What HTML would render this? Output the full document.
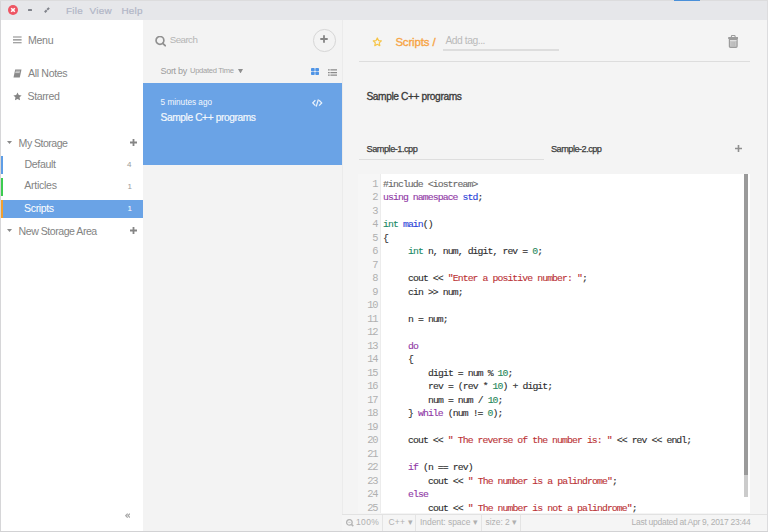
<!DOCTYPE html>
<html><head><meta charset="utf-8">
<style>
*{margin:0;padding:0;box-sizing:border-box}
html,body{width:768px;height:532px;overflow:hidden;background:#f2f2f3;font-family:"Liberation Sans",sans-serif}
.a{position:absolute}
.t{position:absolute;white-space:pre;line-height:1}
#strip{left:0;top:0;width:768px;height:1px;background:#dcdcdd}
#title{left:0;top:1px;width:768px;height:18.5px;background:#e6e7ea}
#frameL{left:0;top:1px;width:1.2px;height:531px;background:#d6d6d8}
#frameR{left:766.5px;top:1px;width:1.5px;height:531px;background:#dcdcde}
#frameB{left:0;top:530.7px;width:768px;height:1.3px;background:#d2d2d4}
#side{left:1px;top:19.5px;width:141.5px;height:511.5px;background:#fff}
#list{left:142.5px;top:19.5px;width:199px;height:511.5px;background:#f3f3f3}
#sep{left:341.5px;top:19.5px;width:1.5px;height:511.5px;background:#ebebeb}
#editor{left:343px;top:19.5px;width:424px;height:511.5px;background:#f4f4f4}
.menu{color:#b0b5c6;font-size:9.9px;letter-spacing:0.3px;-webkit-text-stroke:0.2px #b0b5c6}
.sd{color:#838383;font-size:10.6px}
.cnt{color:#9a9a9a;font-size:8px}
#code{left:380.5px;top:174px;width:369px;height:339px;background:#fff}
#gutter{left:358px;top:174px;width:22.5px;height:339px;background:#f6f6f6;border-right:1px solid #ececec}
.ln{position:absolute;left:358px;width:19.5px;text-align:right;font-family:"Liberation Mono",monospace;font-size:10.4px;letter-spacing:-1.1px;color:#b0b0b0;line-height:13.5px;margin-top:-0.6px;white-space:pre}
.cl{position:absolute;left:383px;font-family:"Liberation Mono",monospace;font-size:9.8px;letter-spacing:-0.91px;color:#2e2e2e;line-height:13.5px;margin-top:-0.9px;-webkit-text-stroke:0.12px currentColor;white-space:pre}
.k{color:#9038a6}.d{color:#2a3fd8}.ty{color:#1a8a66}.s{color:#bb3336}.n{color:#2a8a60}.m{color:#6a6a6a}
#status{left:341.5px;top:513.5px;width:425.5px;height:17.2px;background:#f5f5f5;border-top:1.5px solid #e2e2e2}
.sb{color:#b0b0b0;font-size:8.5px}
</style></head><body>
<div class="a" id="strip"></div>
<div class="a" style="left:674px;top:0;width:26px;height:1px;background:#4a90d9"></div>
<div class="a" id="title"></div>
<div class="a" id="side"></div>
<div class="a" id="list"></div>
<div class="a" id="sep"></div>
<div class="a" id="editor"></div>
<div class="a" id="frameL"></div>
<div class="a" id="frameR"></div>
<div class="a" id="frameB"></div>

<!-- title bar controls -->
<div class="a" style="left:7.7px;top:4.8px;width:10px;height:10px;border-radius:50%;background:#ee5563"></div>
<svg class="a" style="left:7.7px;top:4.8px" width="10" height="10" viewBox="0 0 10 10"><path d="M3.2 3.2L6.8 6.8M6.8 3.2L3.2 6.8" stroke="#fff" stroke-width="1.6"/></svg>
<div class="a" style="left:27.8px;top:9.1px;width:4.2px;height:1.9px;background:#80838b;border-radius:0.5px"></div>
<svg class="a" style="left:44px;top:7px" width="6" height="6" viewBox="0 0 6 6"><path d="M0.8 5.2L2.7 3.3M3.2 2.8L5.1 0.9" stroke="#80838b" stroke-width="2"/></svg>
<div class="t menu" style="left:66px;top:5.8px">File</div>
<div class="t menu" style="left:89.6px;top:5.8px">View</div>
<div class="t menu" style="left:121.4px;top:5.8px">Help</div>

<!-- sidebar -->
<svg class="a" style="left:13.4px;top:36.4px" width="8.6" height="8" viewBox="0 0 8.6 8"><path d="M0 1H8.6M0 3.9H8.6M0 6.8H8.6" stroke="#858585" stroke-width="1.15"/></svg>
<div class="t sd" style="left:28px;top:34.8px;letter-spacing:-0.32px">Menu</div>
<svg class="a" style="left:13px;top:68.5px" width="9" height="9" viewBox="0 0 9 9"><path d="M2.2 0.5H8.5L6.8 8.5H0.5Z" fill="#8a8a8a"/><path d="M2.6 2.2H7M2.3 3.6H6.7" stroke="#fff" stroke-width="0.6"/></svg>
<div class="t sd" style="left:28px;top:67.9px;letter-spacing:-0.34px">All Notes</div>
<svg class="a" style="left:13px;top:91.5px" width="9" height="9" viewBox="0 0 24 24"><path d="M12 1l3.4 7 7.6 1-5.5 5.3 1.3 7.7L12 18.4 5.2 22l1.3-7.7L1 9l7.6-1z" fill="#858585"/></svg>
<div class="t sd" style="left:27.6px;top:90.6px;letter-spacing:-0.42px">Starred</div>

<svg class="a" style="left:7px;top:141px" width="5" height="3" viewBox="0 0 5 3"><path d="M0 0H5L2.5 3Z" fill="#8a8a8a"/></svg>
<div class="t sd" style="left:18.6px;top:137.7px;letter-spacing:-0.54px">My Storage</div>
<svg class="a" style="left:130px;top:138.7px" width="7" height="7" viewBox="0 0 7 7"><path d="M3.5 0V7M0 3.5H7" stroke="#858585" stroke-width="1.8"/></svg>

<div class="a" style="left:1px;top:155.5px;width:2px;height:18.5px;background:#5e9de6"></div>
<div class="t sd" style="left:24.4px;top:158.5px;letter-spacing:-0.32px">Default</div>
<div class="t cnt" style="left:127.1px;top:160.6px">4</div>

<div class="a" style="left:1px;top:177.5px;width:2px;height:18.5px;background:#3ccc50"></div>
<div class="t sd" style="left:24.3px;top:180.4px;letter-spacing:-0.3px">Articles</div>
<div class="t cnt" style="left:127.6px;top:182.6px">1</div>

<div class="a" style="left:1px;top:199.5px;width:141.5px;height:18.5px;background:#6aa3e6"></div>
<div class="a" style="left:1px;top:199.5px;width:2px;height:18.5px;background:#f0a030"></div>
<div class="t sd" style="left:24.1px;top:202.6px;color:#fff;letter-spacing:-0.4px">Scripts</div>
<div class="t cnt" style="left:127.6px;top:204.6px;color:#fff">1</div>

<svg class="a" style="left:7px;top:229px" width="5" height="3" viewBox="0 0 5 3"><path d="M0 0H5L2.5 3Z" fill="#8a8a8a"/></svg>
<div class="t sd" style="left:18.6px;top:226px;letter-spacing:-0.49px">New Storage Area</div>
<svg class="a" style="left:130px;top:226.5px" width="7" height="7" viewBox="0 0 7 7"><path d="M3.5 0V7M0 3.5H7" stroke="#858585" stroke-width="1.8"/></svg>

<svg class="a" style="left:124.6px;top:513.2px" width="5.4" height="5.2" viewBox="0 0 5.4 5.2"><path d="M2.7 0.6L0.8 2.6L2.7 4.6M5 0.6L3.1 2.6L5 4.6" stroke="#a8a8a8" stroke-width="1.3" fill="none"/></svg>

<!-- note list -->
<svg class="a" style="left:155px;top:36px" width="11" height="11" viewBox="0 0 11 11"><circle cx="4.96" cy="4.4" r="3.9" fill="none" stroke="#909090" stroke-width="1.7"/><path d="M7.7 7.3L10.2 9.7" stroke="#909090" stroke-width="1.8" stroke-linecap="round"/></svg>
<div class="t" style="left:169.8px;top:35px;font-size:9.8px;color:#b5b5b5;letter-spacing:-0.6px">Search</div>
<div class="a" style="left:313px;top:29.2px;width:22.6px;height:22.6px;border-radius:50%;border:1px solid #d6d6d6"></div>
<svg class="a" style="left:320.3px;top:35.4px" width="8" height="8" viewBox="0 0 8 8"><path d="M4 0.3V7.7M0.3 4H7.7" stroke="#858585" stroke-width="1.8"/></svg>

<div class="t" style="left:160.5px;top:66.6px;font-size:9px;color:#9c9c9c;letter-spacing:-0.3px">Sort by</div>
<div class="t" style="left:190px;top:67.1px;font-size:7.6px;color:#a2a2a2;letter-spacing:-0.3px">Updated Time</div>
<svg class="a" style="left:238.4px;top:68.8px" width="5" height="4.5" viewBox="0 0 5 4.5"><path d="M0 0H5L2.5 4.5Z" fill="#8e8e8e"/></svg>
<svg class="a" style="left:311px;top:68.2px" width="8" height="7" viewBox="0 0 8 7"><rect x="0" y="0" width="3.7" height="3.2" rx="0.8" fill="#4f94e6"/><rect x="4.3" y="0" width="3.7" height="3.2" rx="0.8" fill="#4f94e6"/><rect x="0" y="3.8" width="3.7" height="3.2" rx="0.8" fill="#4f94e6"/><rect x="4.3" y="3.8" width="3.7" height="3.2" rx="0.8" fill="#4f94e6"/></svg>
<svg class="a" style="left:327.8px;top:68.5px" width="9.2" height="7" viewBox="0 0 9.2 7"><path d="M0 0.9H1.7M2.4 0.9H9.2M0 3.7H1.7M2.4 3.7H9.2M0 6.1H1.7M2.4 6.1H9.2" stroke="#8a8a8a" stroke-width="1.3"/></svg>

<div class="a" style="left:143px;top:83.3px;width:199px;height:81.8px;background:#6aa3e6"></div>
<div class="t" style="left:160.6px;top:98.9px;font-size:8.2px;color:#f4f8fd">5 minutes ago</div>
<div class="t" style="left:160.6px;top:113.4px;font-size:10.2px;color:#f3f8fd;-webkit-text-stroke:0.2px #f3f8fd;letter-spacing:-0.4px">Sample C++ programs</div>
<svg class="a" style="left:312px;top:99px" width="10.5" height="8" viewBox="0 0 10.5 8"><path d="M3.4 1.2L0.8 3.9L3.4 6.6M7.1 1.2L9.7 3.9L7.1 6.6M6.4 0.4L4.2 7.6" stroke="#eaf2fc" stroke-width="1.25" fill="none"/></svg>

<!-- editor header -->
<svg class="a" style="left:372.2px;top:36.8px" width="10.6" height="9.8" viewBox="0 0 24 23"><path d="M12 2.2l2.9 6.2 6.6.8-4.9 4.6 1.3 6.6L12 17.1l-5.9 3.3 1.3-6.6-4.9-4.6 6.6-.8z" fill="none" stroke="#f6c446" stroke-width="2.8" stroke-linejoin="round"/></svg>
<div class="t" style="left:395.4px;top:36.9px;font-size:11.4px;color:#f7a445;-webkit-text-stroke:0.35px #f7a445;letter-spacing:-0.12px">Scripts /</div>
<div class="t" style="left:445.4px;top:35.9px;font-size:10.3px;color:#bababa;letter-spacing:-0.45px">Add tag...</div>
<div class="a" style="left:443px;top:49.4px;width:116px;height:1.3px;background:#dddddd"></div>
<div class="a" style="left:359px;top:61px;width:391px;height:1.4px;background:#dddddd"></div>
<svg class="a" style="left:727.6px;top:35px" width="10.5" height="13" viewBox="0 0 10.5 13"><path d="M3.4 2.2V1.3Q3.4 0.5 4.2 0.5H6.3Q7.1 0.5 7.1 1.3V2.2" stroke="#9c9c9c" stroke-width="1.1" fill="none"/><rect x="0.1" y="2.1" width="10.3" height="2" rx="0.7" fill="#9c9c9c"/><path d="M1.4 4.6H9.1V11.3Q9.1 12.4 8 12.4H2.5Q1.4 12.4 1.4 11.3Z" fill="#c6c6c6" stroke="#9c9c9c" stroke-width="1.2"/><path d="M2 5.6H8.5" stroke="#e9e9e9" stroke-width="0.9"/><path d="M4 7V11M5.25 7V11M6.5 7V11" stroke="#b0b0b0" stroke-width="0.5"/></svg>

<div class="t" style="left:366.4px;top:92px;font-size:10.2px;color:#3a3a3a;-webkit-text-stroke:0.32px #3a3a3a;letter-spacing:-0.39px">Sample C++ programs</div>

<!-- tabs -->
<div class="t" style="left:366.6px;top:144.5px;font-size:9.2px;color:#3c3c3c;-webkit-text-stroke:0.25px #3c3c3c;letter-spacing:-0.5px">Sample-1.cpp</div>
<div class="t" style="left:551px;top:144.5px;font-size:9.2px;color:#3c3c3c;-webkit-text-stroke:0.25px #3c3c3c;letter-spacing:-0.52px">Sample-2.cpp</div>
<div class="a" style="left:359px;top:158.8px;width:185px;height:1.2px;background:#dedede"></div>
<svg class="a" style="left:735px;top:145px" width="7" height="7" viewBox="0 0 7 7"><path d="M3.5 0V7M0 3.5H7" stroke="#8f8f8f" stroke-width="1.6"/></svg>

<!-- code -->
<div class="a" id="gutter"></div>
<div class="a" id="code"></div>
<div class="a" style="left:744.3px;top:174px;width:3.8px;height:300.5px;background:#9a9a9a"></div>
<div class="a" style="left:744.3px;top:474.5px;width:3.8px;height:22px;background:#cbcbcb"></div>

<div id="lines">
<div class="ln" style="top:178.5px">1</div><div class="cl" style="top:178.5px"><span class="m">#include &lt;iostream&gt;</span></div>
<div class="ln" style="top:192px">2</div><div class="cl" style="top:192px"><span class="k">using</span> <span class="k">namespace</span> <span class="d">std</span>;</div>
<div class="ln" style="top:205.5px">3</div>
<div class="ln" style="top:219px">4</div><div class="cl" style="top:219px"><span class="ty">int</span> <span class="d">main</span>()</div>
<div class="ln" style="top:232.5px">5</div><div class="cl" style="top:232.5px">{</div>
<div class="ln" style="top:246px">6</div><div class="cl" style="top:246px;left:408px"><span class="ty">int</span> n, num, digit, rev = <span class="n">0</span>;</div>
<div class="ln" style="top:259.5px">7</div>
<div class="ln" style="top:273px">8</div><div class="cl" style="top:273px;left:408px">cout &lt;&lt; <span class="s">"Enter a positive number: "</span>;</div>
<div class="ln" style="top:286.5px">9</div><div class="cl" style="top:286.5px;left:408px">cin &gt;&gt; num;</div>
<div class="ln" style="top:300px">10</div>
<div class="ln" style="top:313.5px">11</div><div class="cl" style="top:313.5px;left:408px">n = num;</div>
<div class="ln" style="top:327px">12</div>
<div class="ln" style="top:340.5px">13</div><div class="cl" style="top:340.5px;left:408px"><span class="k">do</span></div>
<div class="ln" style="top:354px">14</div><div class="cl" style="top:354px;left:408px">{</div>
<div class="ln" style="top:367.5px">15</div><div class="cl" style="top:367.5px;left:428px">digit = num % <span class="n">10</span>;</div>
<div class="ln" style="top:381px">16</div><div class="cl" style="top:381px;left:428px">rev = (rev * <span class="n">10</span>) + digit;</div>
<div class="ln" style="top:394.5px">17</div><div class="cl" style="top:394.5px;left:428px">num = num / <span class="n">10</span>;</div>
<div class="ln" style="top:408px">18</div><div class="cl" style="top:408px;left:408px">} <span class="k">while</span> (num != <span class="n">0</span>);</div>
<div class="ln" style="top:421.5px">19</div>
<div class="ln" style="top:435px">20</div><div class="cl" style="top:435px;left:408px">cout &lt;&lt; <span class="s">" The reverse of the number is: "</span> &lt;&lt; rev &lt;&lt; endl;</div>
<div class="ln" style="top:448.5px">21</div>
<div class="ln" style="top:462px">22</div><div class="cl" style="top:462px;left:408px"><span class="k">if</span> (n == rev)</div>
<div class="ln" style="top:475.5px">23</div><div class="cl" style="top:475.5px;left:428px">cout &lt;&lt; <span class="s">" The number is a palindrome"</span>;</div>
<div class="ln" style="top:489px">24</div><div class="cl" style="top:489px;left:408px"><span class="k">else</span></div>
<div class="ln" style="top:502.5px">25</div><div class="cl" style="top:502.5px;left:428px">cout &lt;&lt; <span class="s">" The number is not a palindrome"</span>;</div>
</div>

<!-- status bar -->
<div class="a" id="status"></div>
<div class="a" style="left:382px;top:515px;width:1px;height:15.5px;background:#e4e4e4"></div>
<div class="a" style="left:415.3px;top:515px;width:1px;height:15.5px;background:#e4e4e4"></div>
<div class="a" style="left:481px;top:515px;width:1px;height:15.5px;background:#e4e4e4"></div>
<div class="a" style="left:520.2px;top:515px;width:1px;height:15.5px;background:#e4e4e4"></div>
<svg class="a" style="left:346.4px;top:519px" width="8" height="8" viewBox="0 0 8 8"><circle cx="3.4" cy="3.4" r="2.8" fill="none" stroke="#b4b4b4" stroke-width="1.3"/><path d="M2.3 3.4H4.5" stroke="#c4c4c4" stroke-width="0.8"/><path d="M5.4 5.4L7.3 7.1" stroke="#b4b4b4" stroke-width="1.5"/></svg>
<div class="t sb" style="left:356px;top:518.4px;letter-spacing:0.35px">100%</div>
<div class="t sb" style="left:388.4px;top:518.4px;letter-spacing:0.25px">C++ ▾</div>
<div class="t sb" style="left:420px;top:518.4px;letter-spacing:-0.05px">Indent: space ▾</div>
<div class="t sb" style="left:485.6px;top:518.4px;letter-spacing:-0.06px">size: 2 ▾</div>
<div class="t sb" style="left:631.6px;top:518.4px;letter-spacing:-0.28px">Last updated at Apr 9, 2017 23:44</div>
</body></html>
